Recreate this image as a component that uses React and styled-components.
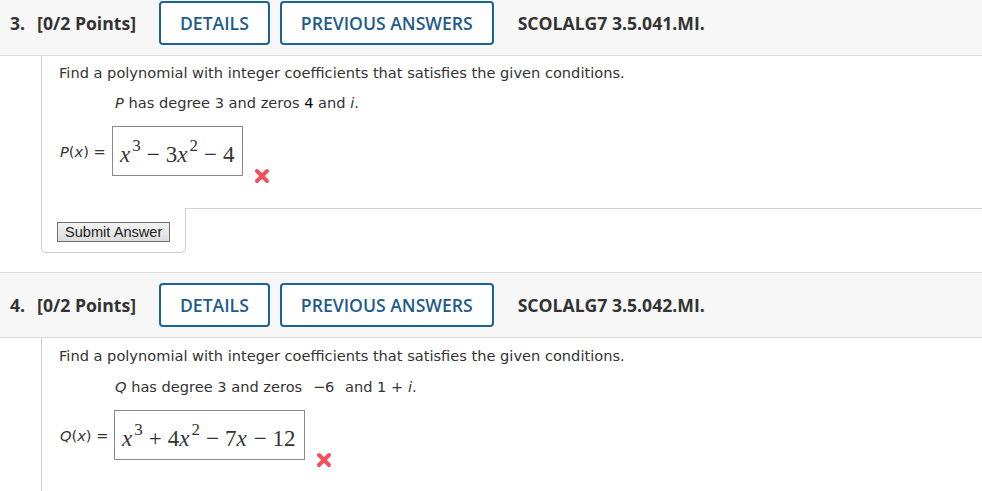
import React from "react";
import styled, { createGlobalStyle } from "styled-components";

const Global = createGlobalStyle`
  html, body { margin: 0; padding: 0; background: #fff; }
  body { overflow: hidden; }
`;

const Page = styled.div`
  margin-top: -10px;
  width: 982px;
  height: 501px;
  overflow: hidden;
`;

const Section = styled.section`
  margin-bottom: 19px;
`;

const Header = styled.div`
  display: flex;
  align-items: center;
  background: #f7f7f7;
  border-top: 1px solid #dedede;
  border-bottom: 1px solid #dedede;
  padding: 10px 10px;
  font-family: "Open Sans", sans-serif;
  font-size: 17.6px;
  color: #333;
`;

const Num = styled.span`
  font-weight: 700;
  margin-right: 12px;
`;

const Points = styled.span`
  font-weight: 700;
  margin-right: 23px;
`;

const HeadButton = styled.button`
  height: 44px;
  box-sizing: border-box;
  padding: 0 19px;
  margin-right: 10px;
  background: #fff;
  border: 2px solid #1d6297;
  border-radius: 4px;
  font-family: "Open Sans", sans-serif;
  font-size: 17.6px;
  font-weight: 600;
  color: #1e5b8c;
`;

const Code = styled.span`
  font-weight: 700;
  margin-left: 14px;
`;

const Body = styled.div`
  margin-left: 41px;
  border-left: 1px solid #cfcfcf;
  padding: ${(p) => p.$top}px 0 ${(p) => p.$bottom}px 17px;
  font-family: "DejaVu Sans", Verdana, sans-serif;
  font-size: 14.6px;
  color: #333;
`;

const Line = styled.div`
  line-height: 18px;
  margin-top: ${(p) => p.$mt || 0}px;
  padding-left: ${(p) => p.$indent || 0}px;
`;

const Dark = styled.span`
  color: #000;
`;

const Spaced = styled.span`
  margin: 0 6px;
`;

const AnswerRow = styled.div`
  display: flex;
  align-items: center;
  margin-top: ${(p) => p.$mt}px;
`;

const Label = styled.span`
  width: ${(p) => p.$w}px;
  flex: none;
  padding-left: 1px;
  box-sizing: border-box;
`;

const AnswerBox = styled.div`
  height: 50px;
  box-sizing: border-box;
  border: 1px solid #8a8a8a;
  padding: 7px 8px 0 7px;
  display: flex;
  align-items: center;
`;

const Math = styled.span`
  font-family: "Liberation Serif", "Times New Roman", serif;
  font-size: 23px;
  color: #333;
  white-space: nowrap;
`;

const Var = styled.i`
  font-style: italic;
  margin-right: 1px;
`;

const Sup = styled.sup`
  font-size: 17px;
  vertical-align: 0.62em;
  line-height: 0;
  margin-left: 1px;
`;

const Op = styled.span`
  margin: 0 6px;
`;

const Mark = styled.svg`
  width: 16px;
  height: 16px;
  margin-left: 11px;
  align-self: flex-end;
  margin-bottom: -8px;
`;

const Footer = styled.div`
  display: flex;
  margin-left: 41px;
`;

const SubmitBox = styled.div`
  width: 128px;
  padding: 14px 0 10px 15px;
  border-left: 1px solid #cfcfcf;
  border-right: 1px solid #cfcfcf;
  border-bottom: 1px solid #cfcfcf;
  border-radius: 0 0 5px 5px;
`;

const Filler = styled.div`
  flex: 1;
  border-top: 1px solid #cfcfcf;
`;

const SubmitButton = styled.button`
  height: 20px;
  box-sizing: border-box;
  padding: 0 7px;
  border: 1px solid #707070;
  border-radius: 0;
  background: linear-gradient(#f3f3f3, #dcdcdc);
  font-family: "Liberation Sans", Arial, sans-serif;
  font-size: 14.6px;
  color: #222;
  line-height: 16px;
`;

const Cross = () => (
  <Mark viewBox="0 0 16 16">
    <g stroke="#f0505f" strokeWidth="4" strokeLinecap="round">
      <line x1="3" y1="3" x2="13" y2="13" />
      <line x1="13" y1="3" x2="3" y2="13" />
    </g>
  </Mark>
);

const QHeader = ({ num, code }) => (
  <Header>
    <Num>{num}.</Num>
    <Points>[0/2 Points]</Points>
    <HeadButton>DETAILS</HeadButton>
    <HeadButton>PREVIOUS ANSWERS</HeadButton>
    <Code>{code}</Code>
  </Header>
);

export default function App() {
  return (
    <Page>
      <Global />
      <Section>
        <QHeader num="3" code="SCOLALG7 3.5.041.MI." />
        <Body $top={8} $bottom={32}>
          <Line>Find a polynomial with integer coefficients that satisfies the given conditions.</Line>
          <Line $mt={12} $indent={56}>
            <i>P</i> has degree 3 and zeros <Dark>4</Dark> and <i>i</i>.
          </Line>
          <AnswerRow $mt={14}>
            <Label $w={53}>
              <i>P</i>(<i>x</i>) =
            </Label>
            <AnswerBox>
              <Math>
                <Var>x</Var>
                <Sup>3</Sup>
                <Op>−</Op>3<Var>x</Var>
                <Sup>2</Sup>
                <Op>−</Op>4
              </Math>
            </AnswerBox>
            <Cross />
          </AnswerRow>
        </Body>
        <Footer>
          <SubmitBox>
            <SubmitButton>Submit Answer</SubmitButton>
          </SubmitBox>
          <Filler />
        </Footer>
      </Section>
      <Section>
        <QHeader num="4" code="SCOLALG7 3.5.042.MI." />
        <Body $top={9} $bottom={40}>
          <Line>Find a polynomial with integer coefficients that satisfies the given conditions.</Line>
          <Line $mt={13} $indent={56}>
            <i>Q</i> has degree 3 and zeros <Spaced>−6</Spaced> and 1 + <i>i</i>.
          </Line>
          <AnswerRow $mt={14}>
            <Label $w={55}>
              <i>Q</i>(<i>x</i>) =
            </Label>
            <AnswerBox>
              <Math>
                <Var>x</Var>
                <Sup>3</Sup>
                <Op>+</Op>4<Var>x</Var>
                <Sup>2</Sup>
                <Op>−</Op>7<Var>x</Var>
                <Op>−</Op>12
              </Math>
            </AnswerBox>
            <Cross />
          </AnswerRow>
        </Body>
      </Section>
    </Page>
  );
}
